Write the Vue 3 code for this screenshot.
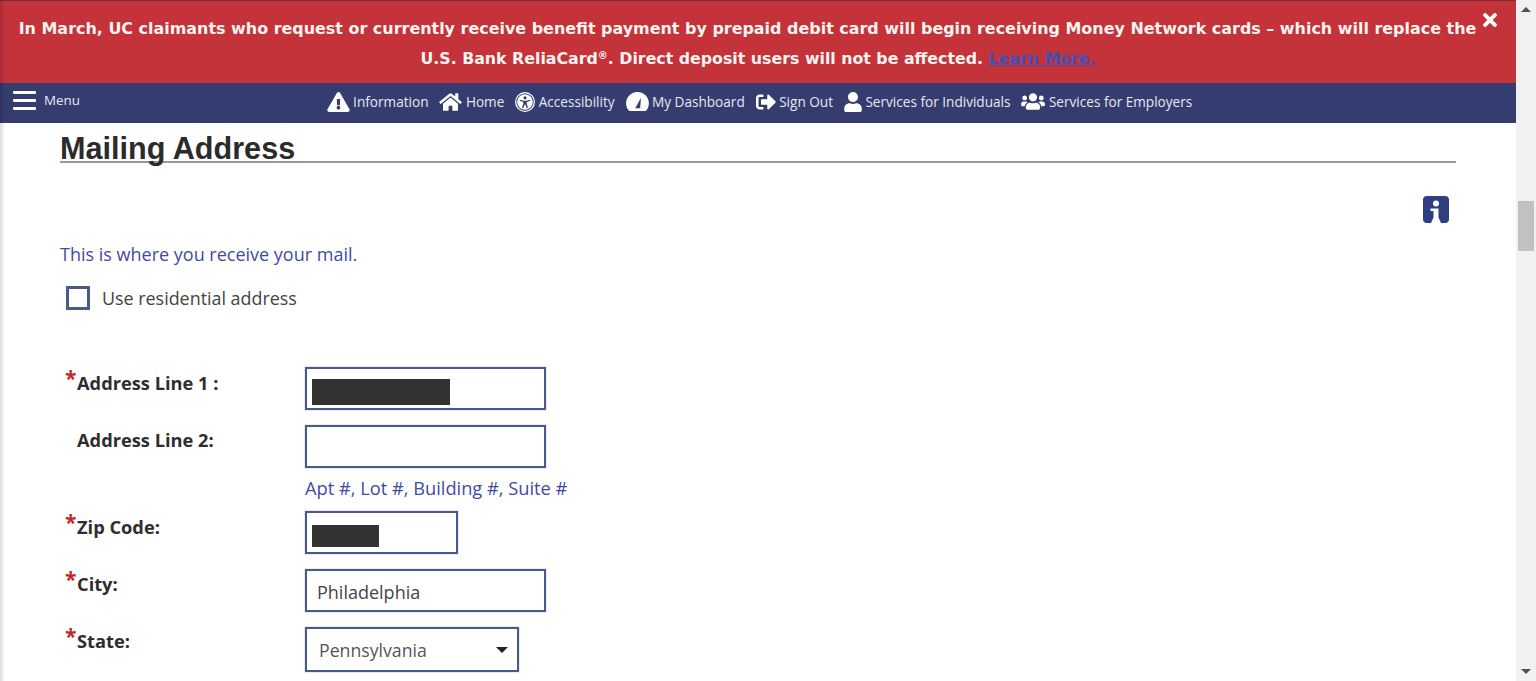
<template>
  <div class="page">
    <div class="main">
      <section class="banner">
        <p class="banner-text">
          <span class="line first">In March, UC claimants who request or currently receive benefit payment by prepaid debit card will begin receiving Money Network cards – which will replace the</span>
          <span class="line second">U.S. Bank ReliaCard<sup>®</sup>. Direct deposit users will not be affected. <a class="learn" href="#">Learn More.</a></span>
        </p>
        <svg class="close" viewBox="0 80 352 352">
          <path fill="#fff" d="M242.72 256l100.07-100.07c12.28-12.28 12.28-32.19 0-44.48l-22.24-22.24c-12.28-12.28-32.19-12.28-44.48 0L176 189.28 75.93 89.21c-12.28-12.28-32.19-12.28-44.48 0L9.21 111.45c-12.28 12.28-12.28 32.19 0 44.48L109.28 256 9.21 356.07c-12.28 12.28-12.28 32.19 0 44.48l22.24 22.24c12.28 12.28 32.2 12.28 44.48 0L176 322.72l100.07 100.07c12.28 12.28 32.2 12.28 44.48 0l22.24-22.24c12.28-12.28 12.28-32.19 0-44.48L242.72 256z" />
        </svg>
      </section>

      <nav class="nav">
        <div class="menu">
          <span class="burger"><i></i><i></i><i></i></span>
          <span>Menu</span>
        </div>
        <div class="links">
          <a v-for="l in links" :key="l.label" class="link" href="#">
            <svg class="ico" :viewBox="l.box" :style="{ width: l.w + 'px', height: l.h + 'px' }">
              <path v-for="(d, i) in l.paths" :key="i" :d="d" fill="#fff" fill-rule="evenodd" />
            </svg>
            <span>{{ l.label }}</span>
          </a>
        </div>
      </nav>

      <main class="content">
        <h1 class="title">Mailing Address</h1>
        <div class="info-row">
          <svg class="info" viewBox="0 0 26 27">
            <rect width="26" height="27" rx="4" fill="#2f3f7f" />
            <circle cx="13" cy="7.5" r="3" fill="#fff" />
            <path d="M7.5 12.5H15.5V21.5L18 27H8L10.5 21.5V15H7.5Z" fill="#fff" />
          </svg>
        </div>
        <p class="lead">This is where you receive your mail.</p>
        <label class="check"><span class="box"></span><span>Use residential address</span></label>

        <div class="form">
          <div class="row">
            <div class="label"><span class="star">*</span>Address Line 1 :</div>
            <div class="field wide"><span class="redact r1"></span></div>
          </div>
          <div class="row">
            <div class="label snug"><span class="star"></span>Address Line 2:</div>
            <div class="stack">
              <div class="field wide"></div>
              <div class="hint">Apt #, Lot #, Building #, Suite #</div>
            </div>
          </div>
          <div class="row">
            <div class="label"><span class="star">*</span>Zip Code:</div>
            <div class="field zip"><span class="redact r2"></span></div>
          </div>
          <div class="row">
            <div class="label snug"><span class="star">*</span>City:</div>
            <div class="field wide value">Philadelphia</div>
          </div>
          <div class="row">
            <div class="label snugger"><span class="star">*</span>State:</div>
            <div class="field state"><span>Pennsylvania</span><span class="caret"></span></div>
          </div>
        </div>
      </main>
    </div>

    <aside class="scrollbar">
      <span class="arrow up"></span>
      <span class="thumb"></span>
      <span class="arrow down"></span>
    </aside>
  </div>
</template>

<script setup>
const links = [
  { label: 'Information', box: '0 0 576 512', w: 23, h: 20, paths: ['M569.517 440.013C587.975 472.007 564.806 512 527.94 512H48.054c-36.937 0-59.999-40.055-41.577-71.987L246.423 23.985c18.467-32.009 64.72-31.951 83.154 0l239.94 416.028zM288 354c-25.405 0-46 20.595-46 46s20.595 46 46 46 46-20.595 46-46-20.595-46-46-46zm-43.673-165.346l7.418 136c.347 6.364 5.609 11.346 11.982 11.346h48.546c6.373 0 11.635-4.982 11.982-11.346l7.418-136c.375-6.874-5.098-12.654-11.982-12.654h-63.383c-6.884 0-12.356 5.78-11.981 12.654z'] },
  { label: 'Home', box: '0 0 576 512', w: 23, h: 20, paths: ['M280.37 148.26L96 300.11V464a16 16 0 0 0 16 16l112.06-.29a16 16 0 0 0 15.92-16V368a16 16 0 0 1 16-16h64a16 16 0 0 1 16 16v95.64a16 16 0 0 0 16 16.05L464 480a16 16 0 0 0 16-16V300L295.67 148.26a12.19 12.19 0 0 0-15.3 0zM571.6 251.47L488 182.56V44.05a12 12 0 0 0-12-12h-56a12 12 0 0 0-12 12v72.61L318.47 43a48 48 0 0 0-61 0L4.34 251.47a12 12 0 0 0-1.6 16.9l25.5 31A12 12 0 0 0 45.15 301l235.22-193.74a12.19 12.19 0 0 1 15.3 0L530.9 301a12 12 0 0 0 16.9-1.6l25.5-31a12 12 0 0 0-1.7-16.93z'] },
  { label: 'Accessibility', box: '0 0 20 20', w: 20, h: 20, paths: ['M10 0a10 10 0 1 1 0 20a10 10 0 1 1 0-20ZM10 1.3a8.7 8.7 0 1 0 0 17.4a8.7 8.7 0 1 0 0-17.4Z', 'M10 2.2a7.8 7.8 0 1 1 0 15.6a7.8 7.8 0 1 1 0-15.6ZM10 4.2a1.6 1.6 0 1 0 0 3.2a1.6 1.6 0 1 0 0-3.2ZM4.9 7.7l-.3 1.1 3.7 1.1v1.9L7 15.8l1.1.4 1.6-3.8h.6l1.6 3.8 1.1-.4-1.3-4v-1.9l3.7-1.1-.3-1.1-3.9 1H8.8Z'] },
  { label: 'My Dashboard', box: '0 0 24 20', w: 23, h: 19, paths: ['M12 0C5.4 0 0 5.2 0 11.8c0 3 1 5.7 2.8 7.8c.3.2.6.4 1 .4h16.4c.4 0 .7-.2 1-.4C23 17.5 24 14.8 24 11.8C24 5.2 18.6 0 12 0ZM15.6 6.2L14.8 17H9.6Z'] },
  { label: 'Sign Out', box: '0 0 512 512', w: 20, h: 20, paths: ['M497 273L329 441c-15 15-41 4.5-41-17v-96H152c-13.3 0-24-10.7-24-24v-96c0-13.3 10.7-24 24-24h136V88c0-21.4 25.9-32 41-17l168 168c9.3 9.4 9.3 24.6 0 34zM192 436v-40c0-6.6-5.4-12-12-12H96c-17.7 0-32-14.3-32-32V160c0-17.7 14.3-32 32-32h84c6.6 0 12-5.4 12-12V76c0-6.6-5.4-12-12-12H96c-53 0-96 43-96 96v192c0 53 43 96 96 96h84c6.6 0 12-5.4 12-12z'] },
  { label: 'Services for Individuals', box: '0 0 448 512', w: 18, h: 20, paths: ['M224 256c70.7 0 128-57.3 128-128S294.7 0 224 0 96 57.3 96 128s57.3 128 128 128zm89.6 32h-16.7c-22.2 10.2-46.9 16-72.9 16s-50.6-5.8-72.9-16h-16.7C60.2 288 0 348.2 0 422.4V464c0 26.5 21.5 48 48 48h352c26.5 0 48-21.5 48-48v-41.6c0-74.2-60.2-134.4-134.4-134.4z'] },
  { label: 'Services for Employers', box: '0 0 640 512', w: 24, h: 19, paths: ['M96 224c35.3 0 64-28.7 64-64s-28.7-64-64-64-64 28.7-64 64 28.7 64 64 64zm448 0c35.3 0 64-28.7 64-64s-28.7-64-64-64-64 28.7-64 64 28.7 64 64 64zm32 32h-64c-17.6 0-33.5 7.1-45.1 18.6 40.3 22.1 68.9 62 75.1 109.4h66c17.7 0 32-14.3 32-32v-32c0-35.3-28.7-64-64-64zm-256 0c61.9 0 112-50.1 112-112S381.9 32 320 32 208 82.1 208 144s50.1 112 112 112zm76.8 32h-8.3c-20.8 10-43.9 16-68.5 16s-47.6-6-68.5-16h-8.3C179.6 288 128 339.6 128 403.2V432c0 26.5 21.5 48 48 48h288c26.5 0 48-21.5 48-48v-28.8c0-63.6-51.6-115.2-115.2-115.2zm-223.7-13.4C161.5 263.1 145.6 256 128 256H64c-35.3 0-64 28.7-64 64v32c0 17.7 14.3 32 32 32h65.9c6.3-47.4 34.9-87.3 75.2-109.4z'] },
]
</script>

<style scoped>
.page {
  display: flex;
  height: 681px;
  overflow: hidden;
  background: #fff;
  font-family: "Open Sans", "Noto Sans", sans-serif;
  color: #333;
}
.main {
  position: relative;
  flex: 1;
  min-width: 0;
}
.main::after {
  content: "";
  position: absolute;
  inset: 0 auto 0 0;
  width: 5px;
  background: linear-gradient(to right, rgba(0, 0, 0, .14), rgba(0, 0, 0, 0));
  pointer-events: none;
}
.banner {
  position: relative;
  height: 83px;
  box-sizing: border-box;
  padding: 13px 0 0 0;
  background: #c4323a;
  border-top: 1px solid #7d2a30;
  color: #fbf3f0;
}
.banner-text {
  margin: 0;
  text-align: center;
  font-family: "DejaVu Sans", sans-serif;
  font-weight: 700;
  font-size: 15.95px;
  line-height: 30px;
  white-space: nowrap;
}
.line {
  display: block;
}
.first {
  padding-right: 21px;
}
.second {
  font-size: 15.8px;
}
.banner-text sup {
  font-size: 10px;
  line-height: 0;
  vertical-align: 5px;
}
.learn {
  color: #4150b8;
  text-decoration: underline;
}
.close {
  position: absolute;
  top: 12px;
  left: 1483px;
  display: block;
  width: 14px;
  height: 14px;
}
.nav {
  display: grid;
  grid-template-columns: 1fr auto 1fr;
  align-items: center;
  height: 40px;
  background: #343c70;
  color: #e6e8f0;
  font-size: 13.6px;
}
.menu {
  display: flex;
  align-items: center;
  gap: 8px;
  padding-left: 13px;
  margin-top: -6px;
  font-size: 13.4px;
}
.burger {
  display: flex;
  flex-direction: column;
  gap: 5px;
  width: 23px;
}
.burger i {
  display: block;
  height: 3px;
  border-radius: 1px;
  background: #fff;
}
.links {
  display: flex;
  gap: 11px;
  margin: -3px 0 0 3px;
}
.link {
  display: flex;
  align-items: center;
  gap: 3.4px;
  color: inherit;
  text-decoration: none;
}
.ico {
  display: block;
  flex: none;
}
.content {
  padding: 0 60px;
}
.title {
  margin: 0;
  padding-top: 7px;
  height: 40px;
  box-sizing: border-box;
  border-bottom: 2px solid #999;
  font-family: "Liberation Sans", Arial, sans-serif;
  font-size: 30.6px;
  line-height: 37px;
  font-weight: 700;
  color: #2b2b2b;
}
.info-row {
  display: flex;
  justify-content: flex-end;
  padding: 33px 7px 0 0;
}
.info {
  display: block;
  width: 26px;
  height: 27px;
}
.lead {
  margin: 18px 0 0;
  font-size: 18px;
  line-height: 26px;
  color: #3f4aa8;
}
.check {
  display: flex;
  align-items: center;
  gap: 12px;
  margin: 18px 0 0 6px;
  font-size: 17.9px;
  line-height: 26px;
  color: #444;
}
.box {
  width: 24px;
  height: 24px;
  box-sizing: border-box;
  border: 3px solid #4a5a8a;
}
.form {
  display: flex;
  flex-direction: column;
  gap: 15px;
  margin-top: 56px;
}
.row {
  display: flex;
  align-items: flex-start;
}
.label {
  display: flex;
  align-items: flex-start;
  width: 245px;
  padding: 3px 0 0 5px;
  box-sizing: border-box;
  font-size: 18.25px;
  line-height: 26px;
  font-weight: 700;
  color: #2e2e2e;
}
.snug {
  padding-top: 2px;
}
.snugger {
  padding-top: 1px;
}
.star {
  width: 12px;
  font-size: 21px;
  line-height: 17px;
  color: #c0272d;
}
.stack {
  display: flex;
  flex-direction: column;
}
.field {
  display: flex;
  align-items: center;
  box-sizing: border-box;
  height: 43px;
  padding: 0 5px;
  border: 2px solid #4a5a8a;
  background: #fff;
  box-shadow: 0 0 1px rgba(74, 90, 138, .7);
}
.wide {
  width: 241px;
}
.zip {
  width: 153px;
}
.value {
  padding-left: 10px;
  font-size: 18px;
  padding-top: 2px;
  color: #444;
}
.state {
  justify-content: space-between;
  width: 214px;
  height: 45px;
  padding: 1px 9px 0 12px;
  font-size: 17.7px;
  color: #555;
}
.redact {
  display: block;
  height: 26px;
  margin-top: 6px;
  background: #333;
}
.r1 {
  width: 138px;
}
.r2 {
  width: 67px;
  height: 22px;
  margin-top: 7px;
}
.caret {
  width: 0;
  height: 0;
  border-left: 6.5px solid transparent;
  border-right: 6.5px solid transparent;
  border-top: 6px solid #222;
}
.hint {
  height: 43px;
  margin-bottom: -15px;
  padding-top: 7px;
  box-sizing: border-box;
  font-size: 18.25px;
  line-height: 26px;
  color: #3f4aa8;
  white-space: nowrap;
}
.scrollbar {
  position: relative;
  flex: none;
  width: 20px;
  background: #f1f1f1;
}
.thumb {
  position: absolute;
  top: 201px;
  left: 2px;
  width: 16px;
  height: 50px;
  background: #c1c1c1;
}
.arrow {
  position: absolute;
  left: 5px;
  width: 0;
  height: 0;
  border-left: 5px solid transparent;
  border-right: 5px solid transparent;
}
.up {
  top: 7px;
  border-bottom: 5px solid #505050;
}
.down {
  bottom: 7px;
  border-top: 5px solid #505050;
}
</style>

<style>
html, body {
  margin: 0;
  overflow: hidden;
}
</style>
